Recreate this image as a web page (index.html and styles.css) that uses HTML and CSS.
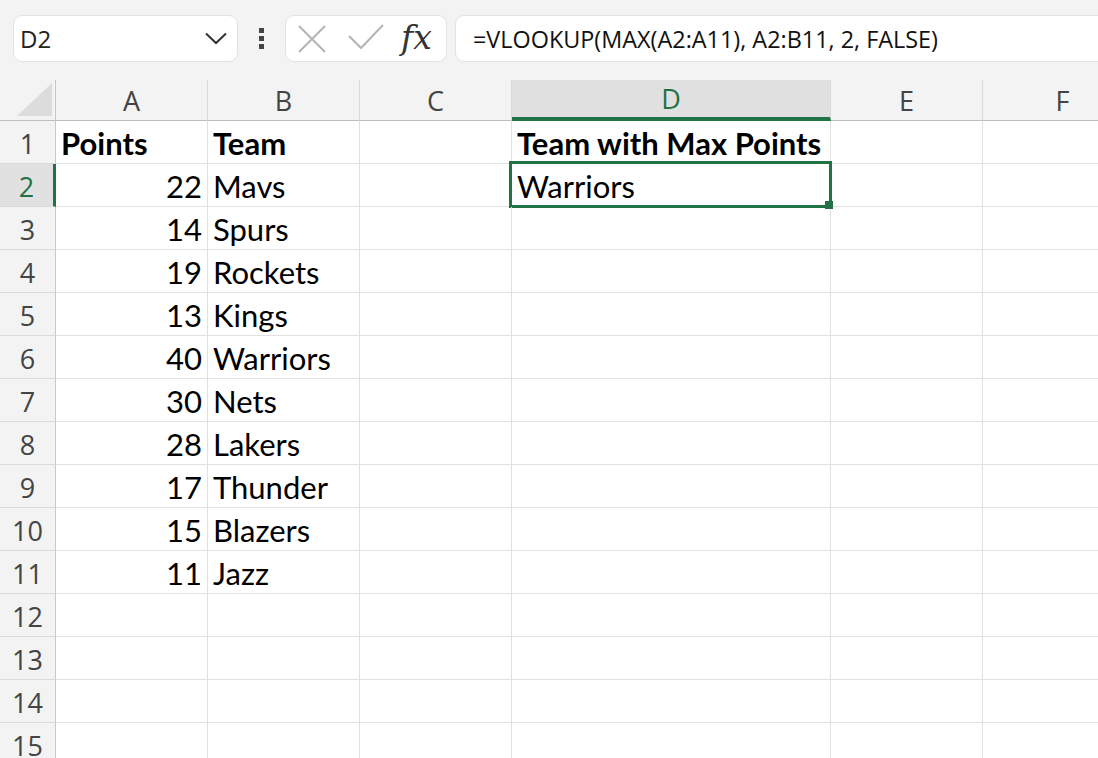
FILE: index.html
```html
<!DOCTYPE html>
<html lang="en">
<head>
  <meta charset="UTF-8" />
  <meta name="viewport" content="width=device-width, initial-scale=1.0"/>
  <title>VLOOKUP with MAX</title>
  <link rel="stylesheet" href="styles.css">
</head>
<body>
  <!-- Formula bar -->
  <div class="toolbar">
    <div class="name-box">
      <span>D2</span>
      <svg class="chevron" width="22" height="13" viewBox="0 0 22 13"><polyline points="1,1.5 11,11 21,1.5" /></svg>
    </div>
    <div class="more">
      <svg width="6" height="22" viewBox="0 0 6 22"><rect x="0" y="0" width="5" height="5"/><rect x="0" y="8" width="5" height="5"/><rect x="0" y="16" width="5" height="5"/></svg>
    </div>
    <div class="func-box">
      <svg class="cancel" width="28" height="28" viewBox="0 0 28 28"><line x1="1" y1="1" x2="27" y2="27"/><line x1="27" y1="1" x2="1" y2="27"/></svg>
      <svg class="enter" width="36" height="26" viewBox="0 0 36 26"><polyline points="1,12 13,24 35,1"/></svg>
      <span class="fx">fx</span>
    </div>
    <div class="formula">=VLOOKUP(MAX(A2:A11), A2:B11, 2, FALSE)</div>
  </div>

  <!-- Sheet grid -->
  <div class="sheet">
    <div class="corner"><svg width="56" height="40" viewBox="0 0 56 40"><polygon points="17,36 52,36 52,3"/></svg></div>
    <div class="ch">A</div><div class="ch">B</div><div class="ch">C</div><div class="ch sel">D</div><div class="ch">E</div><div class="ch">F</div>

    <div class="rh">1</div><div class="c b">Points</div><div class="c b">Team</div><div class="c"></div><div class="c b">Team with Max Points</div><div class="c"></div><div class="c"></div>
    <div class="rh sel">2</div><div class="c num">22</div><div class="c">Mavs</div><div class="c"></div><div class="c active">Warriors</div><div class="c"></div><div class="c"></div>
    <div class="rh">3</div><div class="c num">14</div><div class="c">Spurs</div><div class="c"></div><div class="c"></div><div class="c"></div><div class="c"></div>
    <div class="rh">4</div><div class="c num">19</div><div class="c">Rockets</div><div class="c"></div><div class="c"></div><div class="c"></div><div class="c"></div>
    <div class="rh">5</div><div class="c num">13</div><div class="c">Kings</div><div class="c"></div><div class="c"></div><div class="c"></div><div class="c"></div>
    <div class="rh">6</div><div class="c num">40</div><div class="c">Warriors</div><div class="c"></div><div class="c"></div><div class="c"></div><div class="c"></div>
    <div class="rh">7</div><div class="c num">30</div><div class="c">Nets</div><div class="c"></div><div class="c"></div><div class="c"></div><div class="c"></div>
    <div class="rh">8</div><div class="c num">28</div><div class="c">Lakers</div><div class="c"></div><div class="c"></div><div class="c"></div><div class="c"></div>
    <div class="rh">9</div><div class="c num">17</div><div class="c">Thunder</div><div class="c"></div><div class="c"></div><div class="c"></div><div class="c"></div>
    <div class="rh">10</div><div class="c num">15</div><div class="c">Blazers</div><div class="c"></div><div class="c"></div><div class="c"></div><div class="c"></div>
    <div class="rh">11</div><div class="c num">11</div><div class="c">Jazz</div><div class="c"></div><div class="c"></div><div class="c"></div><div class="c"></div>
    <div class="rh">12</div><div class="c"></div><div class="c"></div><div class="c"></div><div class="c"></div><div class="c"></div><div class="c"></div>
    <div class="rh">13</div><div class="c"></div><div class="c"></div><div class="c"></div><div class="c"></div><div class="c"></div><div class="c"></div>
    <div class="rh">14</div><div class="c"></div><div class="c"></div><div class="c"></div><div class="c"></div><div class="c"></div><div class="c"></div>
    <div class="rh">15</div><div class="c"></div><div class="c"></div><div class="c"></div><div class="c"></div><div class="c"></div><div class="c"></div>
  </div>
</body>
</html>
```

FILE: styles.css
```css
* {
  margin: 0;
  padding: 0;
  box-sizing: border-box;
}

body, html {
  width: 1098px;
  height: 758px;
  overflow: hidden;
  background: #f3f3f3;
  font-family: 'Open Sans', sans-serif;
  color: #222;
}

/* formula bar */
.toolbar {
  display: flex;
  align-items: flex-start;
  height: 80px;
  padding: 15px 0 0 13px;
}

.name-box,
.func-box,
.formula {
  height: 47px;
  background: #fff;
  border: 1px solid #e3e3e3;
  border-radius: 9px;
  display: flex;
  align-items: center;
}

.name-box {
  width: 225px;
  justify-content: space-between;
  padding: 0 10px 0 6px;
  font-size: 24px;
}

.chevron polyline {
  fill: none;
  stroke: #333;
  stroke-width: 2;
}

.more {
  width: 47px;
  height: 47px;
  display: flex;
  align-items: center;
  justify-content: center;
}

.more rect {
  fill: #444;
}

.func-box {
  width: 162px;
  padding-left: 12px;
}

.func-box line,
.func-box polyline {
  fill: none;
  stroke: #b4b4b4;
  stroke-width: 2;
}

.enter {
  margin-left: 22px;
  margin-top: -3px;
}

.fx {
  margin-left: 17px;
  font-family: 'DejaVu Serif', serif;
  font-style: italic;
  font-size: 33px;
  color: #333;
  line-height: 1;
  margin-top: -2px;
}

.formula {
  flex: 1;
  margin-left: 8px;
  margin-right: -30px;
  padding-left: 17px;
  font-size: 23.4px;
  color: #111;
}

/* sheet */
.sheet {
  display: grid;
  grid-template-columns: 56px 152px 152px 152px 319px 152px 160px;
  grid-template-rows: 41px;
  grid-auto-rows: 43px;
  background: #fff;
}

.corner {
  background: #f3f3f3;
  border-right: 1px solid #c8c8c8;
  border-bottom: 1px solid #bdbdbd;
}

.corner polygon {
  fill: #dcdcdc;
}

.ch {
  background: #f3f3f3;
  border-right: 1px solid #dadada;
  border-bottom: 1px solid #bdbdbd;
  display: flex;
  align-items: center;
  justify-content: center;
  font-size: 27px;
  color: #444;
}

.ch.sel {
  background: #e0e0e0;
  color: #217346;
  border-bottom: 4px solid #217346;
}

.rh {
  background: #f3f3f3;
  border-right: 1px solid #c8c8c8;
  border-bottom: 1px solid #dadada;
  display: flex;
  align-items: center;
  justify-content: center;
  padding-top: 3px;
  font-size: 27px;
  color: #444;
}

.rh.sel {
  background: #e1e1e1;
  color: #217346;
  border-right: 3px solid #217346;
}

.c {
  position: relative;
  border-right: 1px solid #e1e1e1;
  border-bottom: 1px solid #e1e1e1;
  display: flex;
  align-items: flex-end;
  padding: 0 5px 1px 5px;
  font-family: 'Lato', sans-serif;
  font-size: 31px;
  line-height: 37px;
  color: #000;
  white-space: nowrap;
}

.c.num {
  justify-content: flex-end;
}

.c.b {
  font-weight: bold;
}

.c.active::after {
  content: '';
  position: absolute;
  top: -3px;
  left: -3px;
  right: -2px;
  bottom: -2px;
  border: 3px solid #217346;
}

.c.active::before {
  content: '';
  position: absolute;
  right: -3px;
  bottom: -3px;
  width: 8px;
  height: 8px;
  background: #217346;
  z-index: 2;
}
```
